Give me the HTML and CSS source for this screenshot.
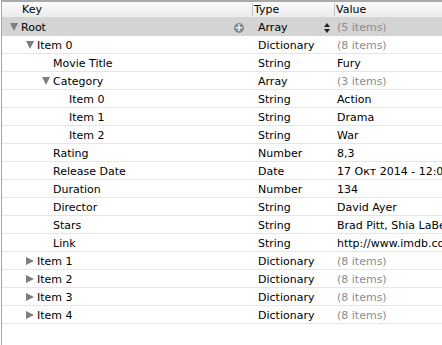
FILE: index.html
```html
<!DOCTYPE html>
<html lang="en">
  <head>
    <meta charset="utf-8" />
    <title>Property List</title>
    <link rel="stylesheet" href="styles.css">
  </head>
  <body>
    <div class="PlistEditor">
      <div class="header">
        <div class="col-key">Key</div>
        <div class="col-type">Type</div>
        <div class="col-value">Value</div>
      </div>

      <ul class="rows">
        <li class="selected">
          <div class="col-key lvl0"><span class="toggle open"></span>Root<span class="btn-add">+</span></div>
          <div class="col-type">Array<span class="stepper"><i class="up"></i><i class="down"></i></span></div>
          <div class="col-value muted">(5 items)</div>
        </li>
        <li>
          <div class="col-key lvl1"><span class="toggle open"></span>Item 0</div>
          <div class="col-type">Dictionary</div>
          <div class="col-value muted">(8 items)</div>
        </li>
        <li>
          <div class="col-key lvl2"><span class="toggle"></span>Movie Title</div>
          <div class="col-type">String</div>
          <div class="col-value">Fury</div>
        </li>
        <li>
          <div class="col-key lvl2"><span class="toggle open"></span>Category</div>
          <div class="col-type">Array</div>
          <div class="col-value muted">(3 items)</div>
        </li>
        <li>
          <div class="col-key lvl3"><span class="toggle"></span>Item 0</div>
          <div class="col-type">String</div>
          <div class="col-value">Action</div>
        </li>
        <li>
          <div class="col-key lvl3"><span class="toggle"></span>Item 1</div>
          <div class="col-type">String</div>
          <div class="col-value">Drama</div>
        </li>
        <li>
          <div class="col-key lvl3"><span class="toggle"></span>Item 2</div>
          <div class="col-type">String</div>
          <div class="col-value">War</div>
        </li>
        <li>
          <div class="col-key lvl2"><span class="toggle"></span>Rating</div>
          <div class="col-type">Number</div>
          <div class="col-value">8,3</div>
        </li>
        <li>
          <div class="col-key lvl2"><span class="toggle"></span>Release Date</div>
          <div class="col-type">Date</div>
          <div class="col-value">17 Окт 2014 - 12:00:00</div>
        </li>
        <li>
          <div class="col-key lvl2"><span class="toggle"></span>Duration</div>
          <div class="col-type">Number</div>
          <div class="col-value">134</div>
        </li>
        <li>
          <div class="col-key lvl2"><span class="toggle"></span>Director</div>
          <div class="col-type">String</div>
          <div class="col-value">David Ayer</div>
        </li>
        <li>
          <div class="col-key lvl2"><span class="toggle"></span>Stars</div>
          <div class="col-type">String</div>
          <div class="col-value">Brad Pitt, Shia LaBeouf, Logan Lerman</div>
        </li>
        <li>
          <div class="col-key lvl2"><span class="toggle"></span>Link</div>
          <div class="col-type">String</div>
          <div class="col-value">http://www.imdb.com/title/tt2713180/</div>
        </li>
        <li>
          <div class="col-key lvl1"><span class="toggle closed"></span>Item 1</div>
          <div class="col-type">Dictionary</div>
          <div class="col-value muted">(8 items)</div>
        </li>
        <li>
          <div class="col-key lvl1"><span class="toggle closed"></span>Item 2</div>
          <div class="col-type">Dictionary</div>
          <div class="col-value muted">(8 items)</div>
        </li>
        <li>
          <div class="col-key lvl1"><span class="toggle closed"></span>Item 3</div>
          <div class="col-type">Dictionary</div>
          <div class="col-value muted">(8 items)</div>
        </li>
        <li>
          <div class="col-key lvl1"><span class="toggle closed"></span>Item 4</div>
          <div class="col-type">Dictionary</div>
          <div class="col-value muted">(8 items)</div>
        </li>
      </ul>
    </div>
  </body>
</html>
```

FILE: styles.css
```css
body {
  margin: 0;
  background: #fff;
  font-family: "DejaVu Sans", "Liberation Sans", sans-serif;
  font-size: 11px;
  color: #000;
  overflow: hidden;
}

.PlistEditor {
  margin-left: 1px;
  border-left: 1px solid #a9a9a9;
  height: 345px;
  white-space: nowrap;
}

/* column header */
.header {
  display: grid;
  grid-template-columns: 250px 82px 1fr;
  height: 15px;
  line-height: 15px;
  border-top: 2px solid #a9a9a9;
  border-bottom: 1px solid #d6d6d6;
  background: linear-gradient(#fbfbfb, #ececec);
}
.header .col-key {
  padding-left: 20px;
}
.header .col-type, .header .col-value {
  border-left: 1px solid #c2c2c2;
  margin: 1px 0;
  line-height: 13px;
  padding-left: 1px;
}

/* rows */
.rows {
  list-style-type: none;
  margin: 0;
  padding: 0;
}
.rows li {
  display: grid;
  grid-template-columns: 250px 82px 1fr;
  height: 17px;
  border-bottom: 1px solid #e6e6e6;
}
.rows li > div {
  padding-top: 2px;
  line-height: 15px;
}
.rows li.selected {
  background: #d4d4d4;
  border-bottom-color: #d4d4d4;
}
.rows .col-key {
  display: flex;
  align-items: center;
}
.rows .col-type {
  display: flex;
  align-items: center;
  padding-left: 6px;
}
.rows .col-value {
  padding-left: 3px;
  overflow: hidden;
}
.rows .muted {
  color: #8c8c8c;
}

/* indent per nesting level */
.lvl0 { padding-left: 8px; }
.lvl1 { padding-left: 24px; }
.lvl2 { padding-left: 40px; }
.lvl3 { padding-left: 56px; }

.toggle {
  width: 11px;
  height: 9px;
  flex: none;
  position: relative;
}
.toggle.open::before, .toggle.closed::before {
  content: "";
  position: absolute;
  left: 0;
  top: 0;
  width: 0;
  height: 0;
}
.toggle.open::before { /* pointing down */
  border-left: 4.5px solid transparent;
  border-right: 4.5px solid transparent;
  border-top: 8px solid #7d7d7d;
}
.toggle.closed::before { /* pointing right */
  border-top: 4.5px solid transparent;
  border-bottom: 4.5px solid transparent;
  border-left: 8px solid #7d7d7d;
}

.btn-add {
  margin-left: auto;
  margin-right: 8px;
  width: 10px;
  height: 10px;
  border-radius: 50%;
  background: #8a8a8a;
  color: #fff;
  font-size: 10px;
  font-weight: bold;
  line-height: 10px;
  text-align: center;
}

.stepper {
  margin-left: auto;
  margin-right: 4px;
  display: flex;
  flex-direction: column;
  gap: 2px;
}
.stepper i {
  width: 0;
  height: 0;
  border-left: 3px solid transparent;
  border-right: 3px solid transparent;
}
.stepper .up {
  border-bottom: 4px solid #222;
}
.stepper .down {
  border-top: 4px solid #222;
}
```
